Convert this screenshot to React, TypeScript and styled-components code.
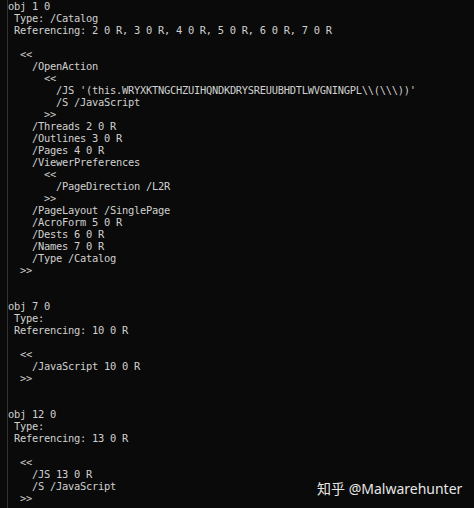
import styled, { createGlobalStyle } from "styled-components";

type LogLine = { indent: number; text: string };

const GlobalStyle = createGlobalStyle`
    html, body {
        margin: 0;
        padding: 0;
        background: #0a0a0a;
    }
`;

const row = (indent: number, text: string): LogLine => ({ indent, text });

const lines: LogLine[] = [
    row(0, "obj 1 0"),
    row(1, "Type: /Catalog"),
    row(1, "Referencing: 2 0 R, 3 0 R, 4 0 R, 5 0 R, 6 0 R, 7 0 R"),
    row(0, ""),
    row(2, "<<"),
    row(4, "/OpenAction"),
    row(6, "<<"),
    row(8, "/JS '(this.WRYXKTNGCHZUIHQNDKDRYSREUUBHDTLWVGNINGPL\\\\(\\\\\\))'"),
    row(8, "/S /JavaScript"),
    row(6, ">>"),
    row(4, "/Threads 2 0 R"),
    row(4, "/Outlines 3 0 R"),
    row(4, "/Pages 4 0 R"),
    row(4, "/ViewerPreferences"),
    row(6, "<<"),
    row(8, "/PageDirection /L2R"),
    row(6, ">>"),
    row(4, "/PageLayout /SinglePage"),
    row(4, "/AcroForm 5 0 R"),
    row(4, "/Dests 6 0 R"),
    row(4, "/Names 7 0 R"),
    row(4, "/Type /Catalog"),
    row(2, ">>"),
    row(0, ""),
    row(0, ""),
    row(0, "obj 7 0"),
    row(1, "Type:"),
    row(1, "Referencing: 10 0 R"),
    row(0, ""),
    row(2, "<<"),
    row(4, "/JavaScript 10 0 R"),
    row(2, ">>"),
    row(0, ""),
    row(0, ""),
    row(0, "obj 12 0"),
    row(1, "Type:"),
    row(1, "Referencing: 13 0 R"),
    row(0, ""),
    row(2, "<<"),
    row(4, "/JS 13 0 R"),
    row(4, "/S /JavaScript"),
    row(2, ">>"),
];

function App() {
    return (
        <>
            <GlobalStyle />
            <Screen>
                <Log>
                    {lines.map((line, i) => (
                        <Line key={i} $indent={line.indent}>
                            {line.text}
                        </Line>
                    ))}
                </Log>
                <Watermark>知乎 @Malwarehunter</Watermark>
            </Screen>
        </>
    );
}

const Screen = styled.div`
    position: relative;
    width: 474px;
    height: 508px;
    overflow: hidden;
    background: #0a0a0a;
    padding-left: 7px;
    box-sizing: border-box;
    display: flex;
`;

// console text: 6px per character cell, 12px per row
const Log = styled.div`
    flex: 1;
    border-left: 1px solid #333333;
    font-family: "DejaVu Sans Mono", "Liberation Mono", monospace;
    font-size: 10.4px;
    letter-spacing: -0.26px;
    line-height: 12px;
    color: #d0d0d0;
`;

const Line = styled.div<{ $indent: number }>`
    height: 12px;
    white-space: pre;
    padding-left: ${(p) => p.$indent * 6}px;
`;

const Watermark = styled.div`
    position: absolute;
    left: 317px;
    top: 479px;
    font-family: "Noto Sans", "Noto Sans CJK SC", sans-serif;
    font-size: 14px;
    line-height: 20px;
    color: #e6e6e6;
    white-space: nowrap;
`;

export default App;
